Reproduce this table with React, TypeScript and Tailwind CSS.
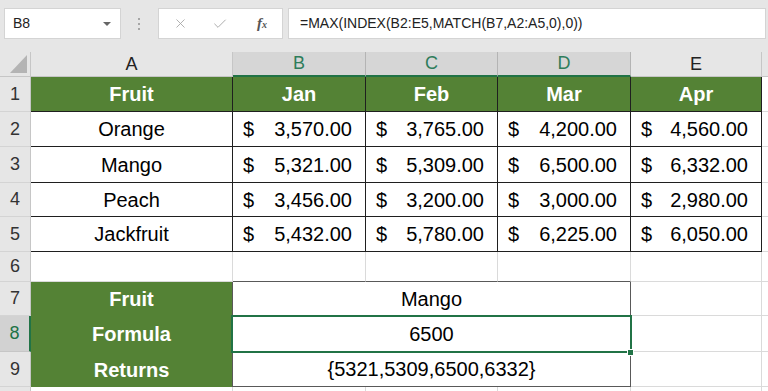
import React from "react";
import { X, Check } from "lucide-react";

const data = [
  ["Orange", "3,570.00", "3,765.00", "4,200.00", "4,560.00"],
  ["Mango", "5,321.00", "5,309.00", "6,500.00", "6,332.00"],
  ["Peach", "3,456.00", "3,200.00", "3,000.00", "2,980.00"],
  ["Jackfruit", "5,432.00", "5,780.00", "6,225.00", "6,050.00"],
];

function RowHead({ n, active }: { n: number | string; active?: boolean }) {
  return active ? (
    <div className="flex items-center justify-center bg-[#d2d2d2] border-b border-b-[#c6c6c6] border-r-2 border-r-[#217346] text-[18px] text-[#217346]">
      {n}
    </div>
  ) : (
    <div className="flex items-center justify-center bg-[#e6e6e6] border-b border-r border-b-[#d4d4d4] border-r-[#c6c6c6] text-[18px] text-[#333]">
      {n}
    </div>
  );
}

function Money({ value }: { value: string }) {
  return (
    <div className="flex items-center justify-between pl-[10px] pr-[13px] border-r border-b border-[#1f1f1f] bg-white text-[20px] text-black">
      <span>$</span>
      <span>{value}</span>
    </div>
  );
}

export default function App() {
  return (
    <div className="w-[768px] h-[391px] overflow-hidden bg-[#e6e6e6] font-['Liberation_Sans',Arial,sans-serif]">
      {/* Formula bar */}
      <div className="flex h-[52px] pt-[8px] items-start">
        <div className="ml-[4px] w-[117px] h-[31px] bg-white border border-[#d4d4d4] flex items-center justify-between pl-[8px] pr-[9px] text-[14px] text-[#222]">
          <span>B8</span>
          <span className="w-0 h-0 border-l-[4px] border-r-[4px] border-t-[4px] border-l-transparent border-r-transparent border-t-[#666]" />
        </div>
        <div className="ml-[17px] h-[31px] flex flex-col items-center justify-center gap-[3px]">
          <span className="w-[2px] h-[2px] bg-[#a6a6a6]" />
          <span className="w-[2px] h-[2px] bg-[#a6a6a6]" />
          <span className="w-[2px] h-[2px] bg-[#a6a6a6]" />
        </div>
        <div className="ml-[18px] w-[125px] h-[31px] bg-white border border-[#d4d4d4] flex items-center text-[#a6a6a6]">
          <X size={15} strokeWidth={1.4} className="ml-[14px]" />
          <Check size={16} strokeWidth={1.4} className="ml-[24px]" />
          <span className="ml-[29px] font-['Liberation_Serif',serif] italic font-bold text-[15px] text-[#555] leading-none">
            f<span className="text-[10px]">x</span>
          </span>
        </div>
        <div className="ml-[5px] w-[478px] h-[31px] bg-white border border-[#d4d4d4] flex items-center pl-[11px] text-[14px] text-[#222]">
          =MAX(INDEX(B2:E5,MATCH(B7,A2:A5,0),0))
        </div>
      </div>

      {/* Sheet */}
      <div className="relative grid grid-cols-[31px_202px_133px_132px_133px_131px_1fr] grid-rows-[25px_35px_35px_36px_34px_35px_30px_34px_36px_35px_1fr] h-[339px] bg-white">
        {/* column headers */}
        <div className="relative bg-[#e6e6e6] border-r border-b border-[#c6c6c6]">
          <svg className="absolute left-[10px] top-[3px]" width="17" height="18" viewBox="0 0 17 18">
            <polygon points="17,0 17,18 0,18" fill="#b4b4b4" />
          </svg>
        </div>
        <div className="flex items-center justify-center bg-[#e6e6e6] border-r border-b border-[#c6c6c6] text-[18px] text-[#222]">A</div>
        <div className="flex items-center justify-center bg-[#d6d6d6] border-r border-r-[#b4b4b4] border-b-2 border-b-[#217346] text-[18px] text-[#2e7d5b]">B</div>
        <div className="flex items-center justify-center bg-[#d6d6d6] border-r border-r-[#b4b4b4] border-b-2 border-b-[#217346] text-[18px] text-[#2e7d5b]">C</div>
        <div className="flex items-center justify-center bg-[#d6d6d6] border-r border-r-[#b4b4b4] border-b-2 border-b-[#217346] text-[18px] text-[#2e7d5b]">D</div>
        <div className="flex items-center justify-center bg-[#e6e6e6] border-r border-b border-[#c6c6c6] text-[18px] text-[#222]">E</div>
        <div className="bg-[#e6e6e6] border-b border-[#c6c6c6]" />

        {/* row 1 */}
        <RowHead n={1} />
        {["Fruit", "Jan", "Feb", "Mar", "Apr"].map((h) => (
          <div key={h} className="flex items-center justify-center bg-[#548235] border-r border-b border-[#1f1f1f] text-[20px] font-bold text-white">
            {h}
          </div>
        ))}
        <div className="border-b border-[#dadada]" />

        {/* rows 2-5 */}
        {data.map((r, i) => (
          <React.Fragment key={r[0]}>
            <RowHead n={i + 2} />
            <div className="flex items-center justify-center border-r border-b border-[#1f1f1f] bg-white text-[20px] text-black">
              {r[0]}
            </div>
            {r.slice(1).map((v, j) => (
              <Money key={j} value={v} />
            ))}
            <div className="border-b border-[#dadada]" />
          </React.Fragment>
        ))}

        {/* row 6 */}
        <RowHead n={6} />
        <div className="border-r border-b border-[#dadada]" />
        <div className="border-r border-r-[#dadada] border-b border-b-[#595959]" />
        <div className="border-r border-r-[#dadada] border-b border-b-[#595959]" />
        <div className="border-r border-r-[#dadada] border-b border-b-[#595959]" />
        <div className="border-r border-b border-[#dadada]" />
        <div className="border-b border-[#dadada]" />

        {/* row 7 */}
        <RowHead n={7} />
        <div className="flex items-center justify-center bg-[#548235] border-r border-r-[#595959] text-[20px] font-bold text-white">Fruit</div>
        <div className="col-span-3 flex items-center justify-center border-r border-b border-[#595959] text-[20px] text-black">Mango</div>
        <div className="border-r border-b border-[#dadada]" />
        <div className="border-b border-[#dadada]" />

        {/* row 8 */}
        <RowHead n={8} active />
        <div className="flex items-center justify-center bg-[#548235] border-r border-r-[#595959] text-[20px] font-bold text-white">Formula</div>
        <div className="col-span-3 flex items-center justify-center border-r border-b border-[#595959] text-[20px] text-black">6500</div>
        <div className="border-r border-b border-[#dadada]" />
        <div className="border-b border-[#dadada]" />

        {/* row 9 */}
        <RowHead n={9} />
        <div className="flex items-center justify-center bg-[#548235] border-r border-r-[#595959] text-[20px] font-bold text-white">Returns</div>
        <div className="col-span-3 flex items-center justify-center border-r border-b border-[#595959] text-[20px] text-black">{"{5321,5309,6500,6332}"}</div>
        <div className="border-r border-b border-[#dadada]" />
        <div className="border-b border-[#dadada]" />

        {/* row 10 */}
        <div className="bg-[#e6e6e6] border-r border-[#c6c6c6]" />
        <div className="border-r border-[#dadada]" />
        <div className="border-r border-[#dadada]" />
        <div className="border-r border-[#dadada]" />
        <div className="border-r border-[#dadada]" />
        <div className="border-r border-[#dadada]" />
        <div />

        {/* selection of B8 */}
        <div className="absolute left-[231px] top-[263px] w-[401px] h-[38px] border-2 border-[#217346] pointer-events-none" />
        <div className="absolute left-[627px] top-[297px] w-[7px] h-[7px] bg-[#217346] border border-white pointer-events-none" />
      </div>
    </div>
  );
}
